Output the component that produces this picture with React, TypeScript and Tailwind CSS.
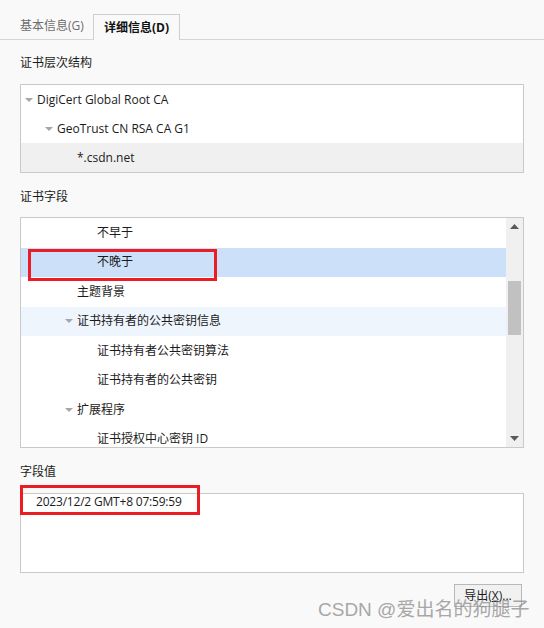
import React from 'react';

const font = { fontFamily: '"Open Sans", "Noto Sans CJK SC", sans-serif' };

type Row = { text: string; level: number; open?: boolean; state?: 'sel' | 'hover' | 'gray' };

const chain: Row[] = [
  { text: 'DigiCert Global Root CA', level: 0, open: true },
  { text: 'GeoTrust CN RSA CA G1', level: 1, open: true },
  { text: '*.csdn.net', level: 2, state: 'gray' },
];

const fields: Row[] = [
  { text: '不早于', level: 3 },
  { text: '不晚于', level: 3, state: 'sel' },
  { text: '主题背景', level: 2 },
  { text: '证书持有者的公共密钥信息', level: 2, open: true, state: 'hover' },
  { text: '证书持有者公共密钥算法', level: 3 },
  { text: '证书持有者的公共密钥', level: 3 },
  { text: '扩展程序', level: 2, open: true },
  { text: '证书授权中心密钥 ID', level: 3 },
];

function Caret() {
  return (
    <svg width="8" height="5" viewBox="0 0 8 5" className="shrink-0">
      <path d="M0 0.5 L8 0.5 L4 4.5 Z" fill="#a6a6a6" />
    </svg>
  );
}

function TreeRow({ row, h }: { row: Row; h: string }) {
  const bg =
    row.state === 'sel' ? 'bg-[#cce1f9]' : row.state === 'hover' ? 'bg-[#eef5fd]' : row.state === 'gray' ? 'bg-[#f0f0f0]' : '';
  return (
    <div className={`${h} ${bg} relative flex items-center`}>
      {row.open && (
        <div className="absolute top-1/2 -translate-y-1/2" style={{ left: 4 + row.level * 20 }}>
          <Caret />
        </div>
      )}
      <span className="whitespace-nowrap" style={{ paddingLeft: 16 + row.level * 20 }}>
        {row.text}
      </span>
    </div>
  );
}

function Arrow({ up }: { up?: boolean }) {
  return (
    <svg width="9" height="5" viewBox="0 0 9 5">
      <path d={up ? 'M0 5 L9 5 L4.5 0 Z' : 'M0 0 L9 0 L4.5 5 Z'} fill="#5a5a5a" />
    </svg>
  );
}

export default function App() {
  return (
    <div className="relative w-[544px] h-[628px] overflow-hidden bg-[#f9f9f9] text-[12px] text-[#1b1b1b]" style={font}>
      {/* tabs */}
      <div className="h-[40px] border-b border-[#d5d5d5] flex items-end pl-[8px]">
        <div className="w-[86px] h-[26px] flex items-center pl-[12px] text-[#6d6d6d]">基本信息(G)</div>
        <div className="w-[87px] h-[26px] -mb-px -ml-px border border-b-0 border-[#cfcfcf] bg-[#f9f9f9] flex items-center justify-center font-bold text-[#111]">
          详细信息(D)
        </div>
      </div>

      <div className="px-[20px]">
        <div className="mt-[13px] h-[20px] flex items-center">证书层次结构</div>
        <div className="mt-[11px] border border-[#c9c9c9] bg-white">
          {chain.map((r) => (
            <TreeRow key={r.text} row={r} h="h-[29px]" />
          ))}
        </div>

        <div className="mt-[14px] h-[20px] flex items-center">证书字段</div>
        <div className="mt-[10px] h-[231px] border border-[#c9c9c9] bg-white flex overflow-hidden">
          <div className="flex-1 overflow-hidden">
            {fields.map((r) => (
              <TreeRow key={r.text} row={r} h="h-[29.5px]" />
            ))}
          </div>
          <div className="w-[17px] bg-[#f0f0f0] flex flex-col items-center">
            <div className="h-[17px] flex items-center justify-center">
              <Arrow up />
            </div>
            <div className="mt-[46px] w-[13px] h-[54px] bg-[#c1c1c1]" />
            <div className="flex-1" />
            <div className="h-[17px] flex items-center justify-center">
              <Arrow />
            </div>
          </div>
        </div>

        <div className="mt-[14px] h-[20px] flex items-center">字段值</div>
        <div className="mt-[11px] h-[80px] border border-[#c9c9c9] bg-white pl-[15px] leading-[16px] tracking-[-0.2px]">
          2023/12/2 GMT+8 07:59:59
        </div>

        <div className="mt-[11px] flex justify-end pr-[2px]">
          <button className="w-[68px] h-[23px] border border-[#b9b9b9] bg-[#f1f1f1] text-[12px] text-[#1b1b1b]">
            导出(<span className="underline">X</span>)...
          </button>
        </div>
      </div>

      {/* annotation boxes */}
      <div className="absolute left-[28px] top-[249px] w-[189px] h-[32px] border-[3px] border-[#ec1c24]" />
      <div className="absolute left-[20px] top-[485px] w-[180px] h-[30px] border-[3px] border-[#ec1c24]" />

      {/* watermark */}
      <div
        className="absolute left-[318px] top-[598px] text-[19px] leading-[23px] text-[#8c8c8c] whitespace-nowrap"
        style={{ fontFamily: '"Liberation Sans", "Noto Sans CJK SC", sans-serif', opacity: 0.75 }}
      >
        CSDN @爱出名的狗腿子
      </div>
    </div>
  );
}
